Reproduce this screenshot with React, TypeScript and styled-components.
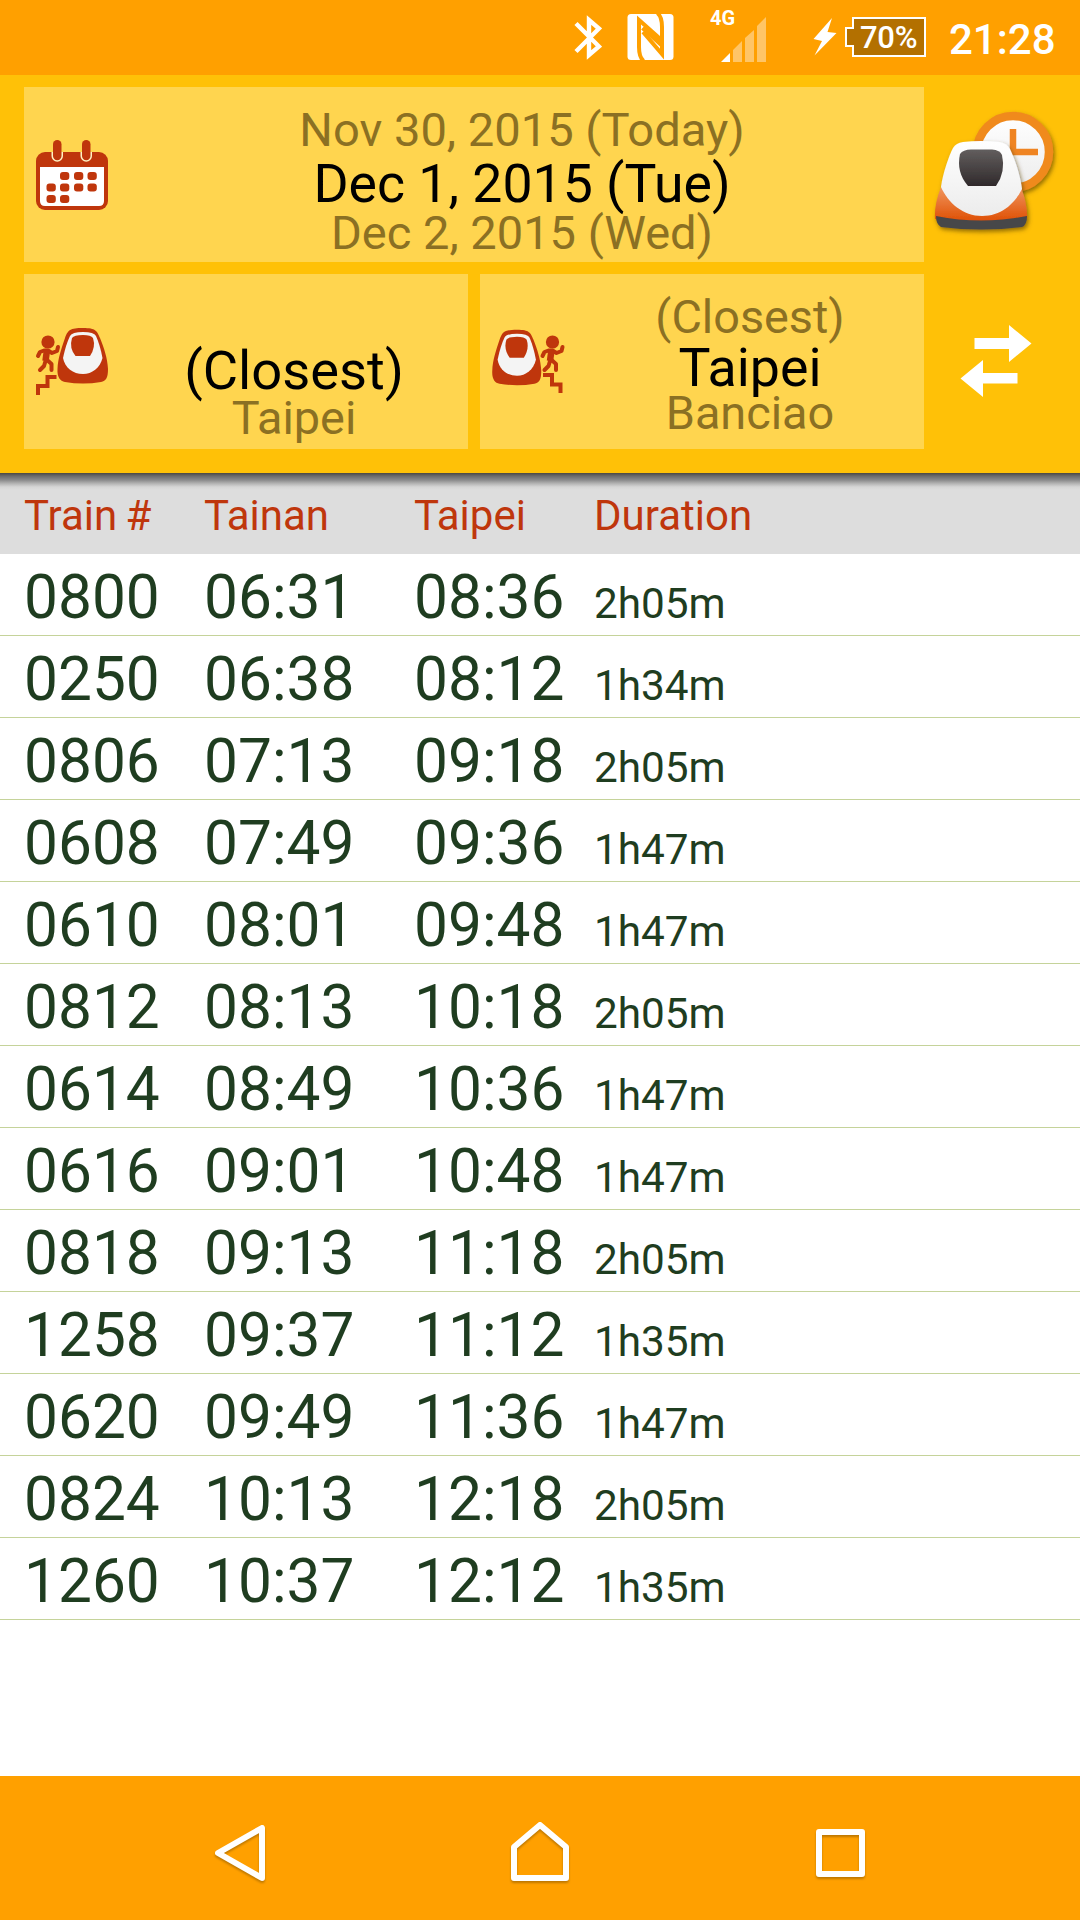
import React from 'react';
import styled, { createGlobalStyle } from 'styled-components';

const Global = createGlobalStyle`
  html, body { margin: 0; padding: 0; background: #fff; }
  * { box-sizing: border-box; }
`;

const Screen = styled.div`
  width: 1080px;
  height: 1920px;
  display: flex;
  flex-direction: column;
  overflow: hidden;
  background: #fff;
  font-family: Roboto, "Noto Sans", sans-serif;
`;

const StatusBar = styled.div`
  height: 75px;
  flex: none;
  background: #ffa000;
  color: #fff;
  display: flex;
  align-items: flex-start;
  justify-content: flex-end;
`;

const StatusIcon = styled.svg<{ $gap?: number }>`
  display: block;
  flex: none;
  margin-left: ${(p) => p.$gap ?? 0}px;
`;

const Signal = styled.div`
  width: 62px;
  height: 75px;
  margin-left: 33px;
  display: flex;
  flex-direction: column;
`;

const NetworkType = styled.span`
  font-size: 20px;
  font-weight: 700;
  line-height: 22px;
  padding-left: 3px;
  margin-top: 7px;
  height: 9px;
`;

const BatteryBox = styled.div`
  position: relative;
  width: 81px;
  height: 40px;
  margin: 17px 0 0 8px;
`;

const BatteryText = styled.span`
  position: absolute;
  left: 15px;
  top: 0;
  line-height: 41px;
  font-size: 31px;
  font-weight: 500;
  letter-spacing: -0.3px;
  white-space: nowrap;
`;

const Clock = styled.span`
  width: 108px;
  margin: 18px 23px 0 23px;
  font-size: 42px;
  font-weight: 500;
  line-height: 44px;
  white-space: nowrap;
`;

const Header = styled.header`
  height: 398px;
  flex: none;
  background: #ffc107;
  padding: 12px 0 24px 24px;
  display: grid;
  grid-template-columns: 444px 444px 1fr;
  grid-template-rows: 175px 175px;
  gap: 12px;
`;

const Card = styled.section<{ $span?: number }>`
  grid-column: span ${(p) => p.$span ?? 1};
  background: #ffd54f;
  display: flex;
`;

const CardIcon = styled.svg`
  width: 96px;
  height: 175px;
  flex: none;
`;

const Wheel = styled.div<{ $top: number }>`
  flex: 1;
  display: flex;
  flex-direction: column;
  align-items: center;
  padding-top: ${(p) => p.$top}px;
`;

const Option = styled.div<{ $active?: boolean; $size: number; $h: number }>`
  font-size: ${(p) => p.$size}px;
  height: ${(p) => p.$h}px;
  line-height: ${(p) => p.$h}px;
  color: ${(p) => (p.$active ? '#000' : '#8b7023')};
  white-space: nowrap;
`;

const ActionIcon = styled.svg`
  width: 144px;
  height: 175px;
  overflow: visible;
`;

const TableHead = styled.div`
  height: 81px;
  flex: none;
  display: grid;
  grid-template-columns: 180px 210px 180px 1fr;
  padding: 1px 0 0 24px;
  background: linear-gradient(#4a4743 0, #6a6a6c 3px, #8a8a8b 7px, #b9b9b9 11px, #d6d6d6 14px, #ddd 17px);
  color: #bf360c;
  font-size: 42px;
  line-height: 84px;
  word-spacing: -2px;
`;

const Row = styled.div`
  height: 82px;
  flex: none;
  display: grid;
  grid-template-columns: 180px 210px 180px 1fr;
  align-items: baseline;
  padding: 8px 0 0 24px;
  border-bottom: 1px solid #c5d39a;
  color: #1f3d20;
`;

const Time = styled.span`
  font-size: 60.4px;
  line-height: 72px;
`;

const Duration = styled.span`
  font-size: 42.3px;
  line-height: 50px;
`;

const NavBar = styled.nav`
  height: 144px;
  flex: none;
  margin-top: auto;
  background: #ffa000;
  display: flex;
  justify-content: center;
  gap: 156px;
`;

const NavIcon = styled.svg`
  width: 144px;
  height: 144px;
  fill: none;
  stroke: #fff;
  stroke-width: 6;
  stroke-linejoin: round;
  filter: drop-shadow(0 2px 1px rgba(110, 70, 0, 0.45));
`;

const trains = [
  ['0800', '06:31', '08:36', '2h05m'],
  ['0250', '06:38', '08:12', '1h34m'],
  ['0806', '07:13', '09:18', '2h05m'],
  ['0608', '07:49', '09:36', '1h47m'],
  ['0610', '08:01', '09:48', '1h47m'],
  ['0812', '08:13', '10:18', '2h05m'],
  ['0614', '08:49', '10:36', '1h47m'],
  ['0616', '09:01', '10:48', '1h47m'],
  ['0818', '09:13', '11:18', '2h05m'],
  ['1258', '09:37', '11:12', '1h35m'],
  ['0620', '09:49', '11:36', '1h47m'],
  ['0824', '10:13', '12:18', '2h05m'],
  ['1260', '10:37', '12:12', '1h35m'],
];

const Bluetooth = () => (
  <StatusIcon width="30" height="75" viewBox="572 0 30 75">
    <path d="M576 23.500 L599 46.500 L589 55 V20 L599 28.500 L576 51.500" fill="none" stroke="#fff" strokeWidth="4.400" />
  </StatusIcon>
);

const Nfc = () => (
  <StatusIcon $gap={25} width="47" height="75" viewBox="627.500 0 47 75">
    <rect x="628" y="14" width="46" height="46" rx="3.500" fill="#fff" />
    <g fill="none" stroke="#ffa000" strokeWidth="4">
      <path d="M644 61 Q639.500 57 639.500 47 V20 L658.500 37 V42 L643 28" />
      <path d="M658 13 Q662.500 17 662.500 27 V54 L643.500 32" />
    </g>
  </StatusIcon>
);

const Calendar = () => (
  <CardIcon viewBox="24 87 96 175">
    <rect x="36" y="152" width="72" height="58" rx="9" fill="#bf360c" />
    <path d="M40 167 H104 V201 Q104 206 99 206 H45 Q40 206 40 201Z" fill="#fff" />
    <g fill="#fff3c4">
      <path d="M51.500 152 H63 V156 A5.750 5.750 0 0 1 51.500 156Z" />
      <path d="M80.500 152 H92 V156 A5.750 5.750 0 0 1 80.500 156Z" />
    </g>
    <g fill="#bf360c">
      <rect x="53" y="140" width="8.500" height="20.300" rx="4.200" />
      <rect x="82" y="140" width="8.500" height="20.300" rx="4.200" />
      {[[60, 172], [74, 172], [87.5, 172], [46.5, 183.5], [60, 183.5], [74, 183.5], [87.5, 183.5], [46.5, 195], [60, 195]].map(([x, y]) => (
        <rect key={`${x}-${y}`} x={x} y={y} width="9.300" height="8" rx="3" />
      ))}
    </g>
  </CardIcon>
);

const TrainFront = () => (
  <>
    <path fill="#bf360c" d="M57.500 369 C58 358 61 350 65 338 C68 330 70 328 83 328 C96 328 97 331 100 338 C104 348 107.500 358 108 369 C108 378 106 381 101 382 Q83 385 65 382 C60 381 57 377 57.500 369Z" />
    <path fill="#f4f4f4" d="M63 358 Q66 344 70 336 Q72 332 83 332 Q94 332 96 336 Q100 345 102.500 358 C100 368 92 374 83 374 C73 374 65 368 63 358Z" />
    <path fill="#bf360c" d="M72 338 Q74 335 83 335 Q91 335 93 338 Q96 347 90 356 H75.500 Q69 348 72 338Z" />
  </>
);

const Runner = () => (
  <g fill="none" stroke="#bf360c" strokeLinecap="round" strokeLinejoin="round">
    <circle cx="48" cy="342" r="6.600" fill="#bf360c" stroke="none" />
    <path strokeWidth="4" d="M38 356 L40 352 L44 350.500 H48 L52 353 L57 351 L58 347" />
    <path strokeWidth="6.500" strokeLinecap="butt" d="M47 350 L45.500 361" />
    <path strokeWidth="4" d="M45.500 361 L44 366 L40 370 M46 359 L51.500 364 V370" />
  </g>
);

const Boarding = () => (
  <CardIcon viewBox="24 274 96 175">
    <TrainFront />
    <Runner />
    <path fill="none" stroke="#bf360c" strokeWidth="4" d="M38 395 V386 H47.500 V377 H56.500" />
  </CardIcon>
);

const Alighting = () => (
  <CardIcon viewBox="480 274 96 175">
    <g transform="translate(436.500 1.700) scale(.97 1)"><TrainFront /></g>
    <g transform="translate(504.500 0)"><Runner /></g>
    <path fill="none" stroke="#bf360c" strokeWidth="4" d="M543 375 H552 V384.500 H560.500 V393" />
  </CardIcon>
);

const AppLogo = () => (
  <ActionIcon viewBox="936 87 144 175">
    <defs>
      <linearGradient id="body" x1="0" y1="0" x2="0" y2="1">
        <stop offset="0" stopColor="#fff" /><stop offset="1" stopColor="#ececec" />
      </linearGradient>
      <linearGradient id="skirt" gradientUnits="userSpaceOnUse" x1="0" y1="185" x2="0" y2="220">
        <stop offset="0" stopColor="#f29a63" /><stop offset="1" stopColor="#df5208" />
      </linearGradient>
      <linearGradient id="glass" x1="0" y1="0" x2="0" y2="1">
        <stop offset="0" stopColor="#625e5e" /><stop offset="1" stopColor="#302a2b" />
      </linearGradient>
      <filter id="shade" x="-20%" y="-20%" width="150%" height="150%">
        <feDropShadow dx="1.500" dy="2.500" stdDeviation="2" floodColor="#5a4300" floodOpacity=".65" />
      </filter>
    </defs>
    <g filter="url(#shade)">
      <circle cx="1013" cy="152" r="36" fill="url(#body)" stroke="#f08a1d" strokeWidth="8.500" />
      <path d="M1013 129 V152 H1038" stroke="#ef8420" strokeWidth="6.500" fill="none" />
    </g>
    <g filter="url(#shade)">
      <path fill="url(#skirt)" d="M941 187 L950 160 H1012 L1021 187 Q1028 206 1027 219 Q981 228 935 219 Q934 205 941 187Z" />
      <path fill="#47464a" d="M936 216 Q981 225 1027 216 Q1027 225 1022 227 Q981 232 941 227 Q936 224 936 216Z" />
      <path fill="url(#body)" d="M941 187 C943 172 949 156 953 148 Q956 143 963 142 Q981 140 999 142 Q1007 143 1010 149 C1015 160 1020 174 1022 189 C1014 205 1000 216 982 216 C963 216 948 203 941 187Z" />
      <path fill="url(#glass)" d="M960 154 Q963 149.500 971 149.500 H992 Q1000 150 1002 155 Q1006 172 996 186 H968 Q956 172 960 154Z" />
    </g>
  </ActionIcon>
);

const Swap = () => (
  <ActionIcon viewBox="936 274 144 175">
    <path fill="#fff" d="M974.500 338 H1009 V325 L1031.500 343.500 L1009 362 V349 H974.500Z M1017.500 373 V383.500 H983 V397 L960.500 378.500 L983 360 V373Z" />
  </ActionIcon>
);

export default function App() {
  return (
    <Screen>
      <Global />
      <StatusBar>
        <Bluetooth />
        <Nfc />
        <Signal>
          <NetworkType>4G</NetworkType>
          <StatusIcon width="62" height="50" viewBox="708 15 62 50">
            <path fill="#fff" d="M722 61 L731 52 V61Z" />
            <path fill="#ffc566" d="M734 49 L743 40 V61 H734Z M746 37 L755 29 V61 H746Z M758 25 L767 16 V61 H758Z" />
          </StatusIcon>
        </Signal>
        <StatusIcon $gap={44} width="24" height="75" viewBox="814 0 24 75">
          <path fill="#fff" d="M833 18 L814.500 39 L823 41 L815.500 55.500 L837.500 33 L828.500 32Z" />
        </StatusIcon>
        <BatteryBox>
          <StatusIcon width="81" height="40" viewBox="0 0 81 40">
            <path d="M8 1 H80 V39 H8 V29 H1 V11 H8Z" fill="#b37000" stroke="#fff" strokeWidth="2" />
          </StatusIcon>
          <BatteryText>70%</BatteryText>
        </BatteryBox>
        <Clock>21:28</Clock>
      </StatusBar>
      <Header>
        <Card $span={2}>
          <Calendar />
          <Wheel $top={15}>
            <Option $size={47.1} $h={56}>Nov 30, 2015 (Today)</Option>
            <Option $size={53.6} $h={51} $active>Dec 1, 2015 (Tue)</Option>
            <Option $size={47} $h={47}>Dec 2, 2015 (Wed)</Option>
          </Wheel>
        </Card>
        <AppLogo />
        <Card>
          <Boarding />
          <Wheel $top={69}>
            <Option $size={54.3} $h={56} $active>(Closest)</Option>
            <Option $size={46.8} $h={38}>Taipei</Option>
          </Wheel>
        </Card>
        <Card>
          <Alighting />
          <Wheel $top={16}>
            <Option $size={46.8} $h={55}>(Closest)</Option>
            <Option $size={53.7} $h={46} $active>Taipei</Option>
            <Option $size={46.8} $h={44}>Banciao</Option>
          </Wheel>
        </Card>
        <Swap />
      </Header>
      <TableHead>
        <span>Train #</span>
        <span>Tainan</span>
        <span>Taipei</span>
        <span>Duration</span>
      </TableHead>
      {trains.map(([no, dep, arr, dur]) => (
        <Row key={no}>
          <Time>{no}</Time>
          <Time>{dep}</Time>
          <Time>{arr}</Time>
          <Duration>{dur}</Duration>
        </Row>
      ))}
      <NavBar>
        <NavIcon viewBox="168 1776 144 144"><path d="M218 1853 L262 1828 V1878Z" /></NavIcon>
        <NavIcon viewBox="468 1776 144 144"><path d="M514 1847 L540 1825 L566 1847 V1878 H514Z" /></NavIcon>
        <NavIcon viewBox="768 1776 144 144"><rect x="819" y="1832" width="43" height="42" /></NavIcon>
      </NavBar>
    </Screen>
  );
}
